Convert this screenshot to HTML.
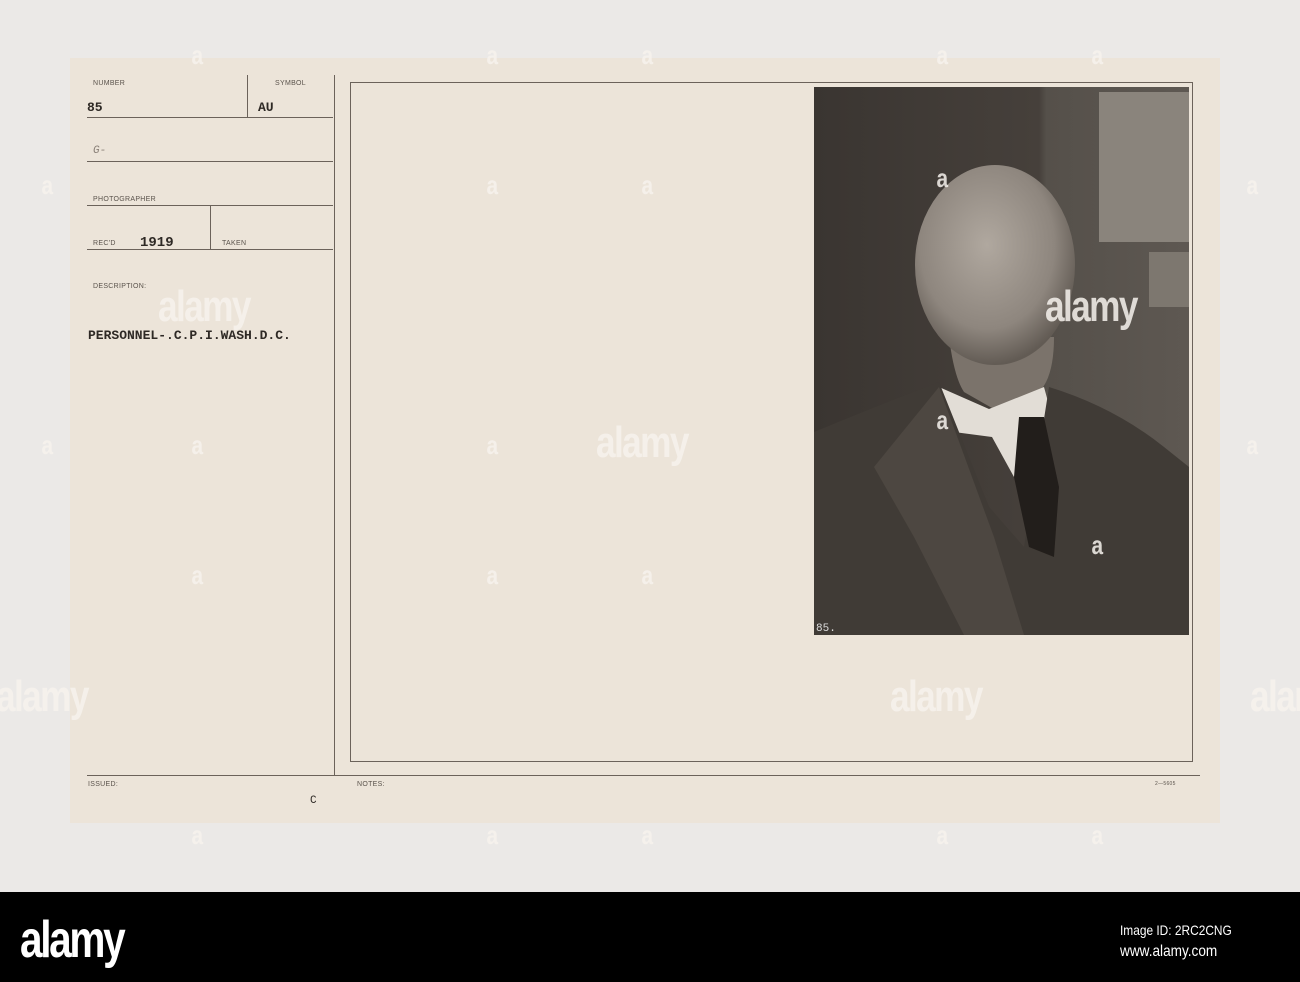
<!DOCTYPE html>
<html><head><meta charset="utf-8"><style>
body{margin:0;width:1300px;height:982px;background:#ebe9e7;position:relative;overflow:hidden;font-family:"Liberation Mono",monospace;color:#3a3430}
.card{position:absolute;left:70px;top:58px;width:1150px;height:765px;background:#ece4d9}
.l{position:absolute;background:#6b625a}
.t{position:absolute;font-family:"Liberation Sans",sans-serif;font-size:7px;color:#5a534c;letter-spacing:.3px}
.m{position:absolute;font-size:13px;color:#2e2925;font-weight:bold}
.wm{position:absolute;font-family:"Liberation Sans",sans-serif;font-weight:bold;color:#f7f3ee;opacity:.85;font-size:44px;letter-spacing:-2px;transform:scaleX(.8);transform-origin:left}
.a{position:absolute;font-family:"Liberation Sans",sans-serif;font-weight:bold;color:#f7f3ee;opacity:.85;font-size:26px;transform:scaleX(.8)}
.bar{position:absolute;left:0;top:892px;width:1300px;height:90px;background:#000}
</style></head><body>
<div class="card"></div>
<div class="l" style="left:87px;top:117px;width:246px;height:1px"></div>
<div class="l" style="left:87px;top:161px;width:246px;height:1px"></div>
<div class="l" style="left:87px;top:205px;width:246px;height:1px"></div>
<div class="l" style="left:87px;top:249px;width:246px;height:1px"></div>
<div class="l" style="left:247px;top:75px;width:1px;height:42px"></div>
<div class="l" style="left:210px;top:206px;width:1px;height:43px"></div>
<div class="l" style="left:334px;top:75px;width:1px;height:700px"></div>
<div class="l" style="left:350px;top:82px;width:1px;height:680px"></div>
<div class="l" style="left:350px;top:82px;width:843px;height:1px"></div>
<div class="l" style="left:1192px;top:82px;width:1px;height:680px"></div>
<div class="l" style="left:350px;top:761px;width:843px;height:1px"></div>
<div class="l" style="left:87px;top:775px;width:1113px;height:1px"></div>
<div class="t" style="left:93px;top:80px">NUMBER</div>
<div class="t" style="left:275px;top:80px">SYMBOL</div>
<div class="m" style="left:87px;top:100px">85</div>
<div class="m" style="left:258px;top:100px">AU</div>
<div class="m" style="left:93px;top:145px;font-size:11px;color:#8a8078;font-style:italic;font-weight:normal">G-</div>
<div class="t" style="left:93px;top:196px">PHOTOGRAPHER</div>
<div class="t" style="left:93px;top:240px">REC'D</div>
<div class="m" style="left:140px;top:235px;font-size:14px">1919</div>
<div class="t" style="left:222px;top:240px">TAKEN</div>
<div class="t" style="left:93px;top:283px">DESCRIPTION:</div>
<div class="m" style="left:88px;top:328px;font-size:13px">PERSONNEL-.C.P.I.WASH.D.C.</div>
<div class="t" style="left:88px;top:781px">ISSUED:</div>
<div class="t" style="left:357px;top:781px">NOTES:</div>
<div class="m" style="left:310px;top:795px;font-size:11px;font-weight:normal">C</div>
<div class="t" style="left:1155px;top:781px;font-size:5px">2—5605</div>
<svg style="position:absolute;left:814px;top:87px" width="375" height="548" viewBox="0 0 375 548">
<defs><linearGradient id="bg" x1="0" x2="1"><stop offset="0" stop-color="#3a3531"/><stop offset=".6" stop-color="#46403b"/><stop offset=".62" stop-color="#55504a"/><stop offset="1" stop-color="#5e5852"/></linearGradient>
<radialGradient id="fc" cx=".45" cy=".4" r=".6"><stop offset="0" stop-color="#b0a89f"/><stop offset=".7" stop-color="#8e867e"/><stop offset="1" stop-color="#625b54"/></radialGradient></defs>
<rect width="375" height="548" fill="url(#bg)"/>
<rect x="285" y="5" width="90" height="150" fill="#8a847c"/>
<rect x="335" y="165" width="40" height="55" fill="#7d776f"/>
<path d="M135 250 Q140 290 150 305 L185 325 L225 305 Q240 290 240 250Z" fill="#7b736b"/>
<ellipse cx="181" cy="178" rx="80" ry="100" fill="url(#fc)"/>
<path d="M125 300 L175 322 L230 300 L245 355 L200 390 L178 350 L140 345Z" fill="#e2ddd6"/>
<path d="M0 345 Q60 320 125 295 L175 420 L210 460 L235 300 Q300 320 350 360 L375 380 L375 548 L0 548Z" fill="#403b36"/>
<path d="M205 330 L230 330 L245 400 L240 470 L215 460 L200 390Z" fill="#221e1b"/>
<path d="M60 380 L125 300 L180 450 L210 548 L150 548 L100 450Z" fill="#4d4741"/>
<text x="2" y="544" fill="#ddd" font-family="Liberation Mono" font-size="11">85.</text>
</svg>
<div class="wm" style="left:158px;top:282px">alamy</div>
<div class="wm" style="left:596px;top:418px">alamy</div>
<div class="wm" style="left:1045px;top:282px">alamy</div>
<div class="wm" style="left:890px;top:672px">alamy</div>
<div class="wm" style="left:-4px;top:672px">alamy</div>
<div class="wm" style="left:1250px;top:672px">alamy</div>
<div class="a" style="left:190px;top:40px">a</div>
<div class="a" style="left:485px;top:40px">a</div>
<div class="a" style="left:640px;top:40px">a</div>
<div class="a" style="left:935px;top:40px">a</div>
<div class="a" style="left:1090px;top:40px">a</div>
<div class="a" style="left:40px;top:170px">a</div>
<div class="a" style="left:485px;top:170px">a</div>
<div class="a" style="left:640px;top:170px">a</div>
<div class="a" style="left:935px;top:163px">a</div>
<div class="a" style="left:1245px;top:170px">a</div>
<div class="a" style="left:40px;top:430px">a</div>
<div class="a" style="left:190px;top:430px">a</div>
<div class="a" style="left:485px;top:430px">a</div>
<div class="a" style="left:1245px;top:430px">a</div>
<div class="a" style="left:935px;top:405px">a</div>
<div class="a" style="left:190px;top:560px">a</div>
<div class="a" style="left:485px;top:560px">a</div>
<div class="a" style="left:640px;top:560px">a</div>
<div class="a" style="left:1090px;top:530px">a</div>
<div class="a" style="left:190px;top:820px">a</div>
<div class="a" style="left:485px;top:820px">a</div>
<div class="a" style="left:640px;top:820px">a</div>
<div class="a" style="left:935px;top:820px">a</div>
<div class="a" style="left:1090px;top:820px">a</div>
<div class="bar"></div>
<div style="position:absolute;left:20px;top:910px;color:#fff;font-family:'Liberation Sans',sans-serif;font-weight:bold;font-size:52px;letter-spacing:-3px;transform:scaleX(.78);transform-origin:left">alamy</div>
<div style="position:absolute;left:1120px;top:922px;color:#fff;font-family:'Liberation Sans',sans-serif;font-size:14px;transform:scaleX(.85);transform-origin:left">Image ID: 2RC2CNG</div>
<div style="position:absolute;left:1120px;top:943px;color:#fff;font-family:'Liberation Sans',sans-serif;font-size:16px;transform:scaleX(.85);transform-origin:left">www.alamy.com</div>
</body></html>
